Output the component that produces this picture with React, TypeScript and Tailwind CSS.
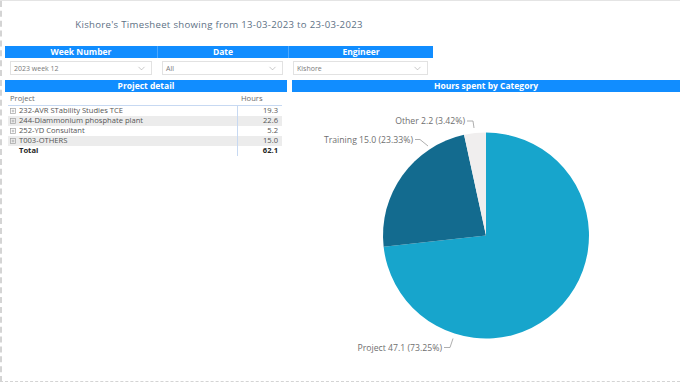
import { ChevronDown } from 'lucide-react'
import React from 'react'

const rows = [
  { name: '232-AVR STability Studies TCE', hours: '19.3' },
  { name: '244-Diammonium phosphate plant', hours: '22.6' },
  { name: '252-YD Consultant', hours: '5.2' },
  { name: 'T003-OTHERS', hours: '15.0' },
]

const slicers = [
  { title: 'Week Number', value: '2023 week 12', width: 'w-[152px]' },
  { title: 'Date', value: 'All', width: 'w-[131px]' },
  { title: 'Engineer', value: 'Kishore', width: 'w-[145px]' },
]

const PlusBox = () => (
  <svg width="6" height="6" viewBox="0 0 6 6" className="shrink-0">
    <rect x="0.5" y="0.5" width="5" height="5" fill="none" stroke="#a0a0a0" strokeWidth="0.7" />
    <path d="M1.6 3h2.8M3 1.6v2.8" stroke="#a0a0a0" strokeWidth="0.7" />
  </svg>
)

const PieChart = () => {
  // center (194,143.5) r 103, slices go clockwise from 12 o'clock
  return (
    <svg width="388" height="288" viewBox="0 0 388 288">
      <path d="M194 143.5 L194 40.5 A103 103 0 1 1 91.62 154.8 Z" fill="#17a5cc" />
      <path d="M194 143.5 L91.62 154.8 A103 103 0 0 1 172.06 42.87 Z" fill="#136b8f" />
      <path d="M194 143.5 L172.06 42.87 A103 103 0 0 1 194 40.5 Z" fill="#f0eeee" />

      <g fill="none" stroke="#9a9a9a" strokeWidth="0.8">
        <path d="M175 29 L181 29 L182 36" />
        <path d="M123 47.5 L128 47.5 L136 54" />
        <path d="M152 255.5 L158 255.5 L161 246.5" />
      </g>
      <g fill="#6f6f6f" fontSize="8.7" fontFamily="'Open Sans', sans-serif" textAnchor="end">
        <text x="173" y="32.3">Other 2.2 (3.42%)</text>
        <text x="121" y="50.8">Training 15.0 (23.33%)</text>
        <text x="150" y="258.8">Project 47.1 (73.25%)</text>
      </g>
    </svg>
  )
}

const App = () => {
  return (
    <div className="w-[680px] h-[382px] bg-white border-t border-[#e4e4e4] font-['Open_Sans',sans-serif] overflow-hidden">
      <div className="h-[381px] border-l-2 border-b border-dashed border-[#d4d4d4] pl-[3px] flex flex-col">
        {/* title */}
        <div className="w-[428px] h-[45px] flex items-center justify-center pt-[3px]">
          <span className="text-[9.6px] tracking-[0.3px] text-[#5d7185]">
            Kishore's Timesheet showing from 13-03-2023 to 23-03-2023
          </span>
        </div>

        {/* slicers */}
        <div className="flex w-[428px]">
          {slicers.map((s, i) => (
            <div key={s.title} className={`${s.width} flex flex-col`}>
              <div
                className={`h-[12px] bg-[#118dff] flex items-center justify-center text-white text-[8.5px] font-bold leading-none ${
                  i > 0 ? 'border-l border-[#4aa8ff]' : ''
                }`}
              >
                {s.title}
              </div>
              <div className="px-[5px] pt-[3px]">
                <div className="h-[14px] border border-[#e2e2e2] flex items-center justify-between pl-[3px] pr-[4px]">
                  <span className="text-[7px] text-[#7a7a7a] leading-none">{s.value}</span>
                  <ChevronDown size={11} strokeWidth={1} color="#8a8a8a" />
                </div>
              </div>
            </div>
          ))}
        </div>

        {/* panels */}
        <div className="flex gap-[5px] mt-[5px] flex-1">
          <div className="w-[282px] flex flex-col">
            <div className="h-[12px] bg-[#118dff] flex items-center justify-center text-white text-[8.5px] font-bold leading-none">
              Project detail
            </div>
            <div className="pl-[3px] pr-[5px] text-[7.6px] leading-none">
              <div className="h-[14px] flex items-center border-b border-[#c7d9f2] text-[#6a6a6a] pt-[1px]">
                <div className="w-[229px] pl-[2px]">Project</div>
                <div className="flex-1 pl-[4px]">Hours</div>
              </div>
              {rows.map((r, i) => (
                <div
                  key={r.name}
                  className={`h-[10px] flex items-center text-[#555] ${i % 2 === 1 ? 'bg-[#ececec]' : ''}`}
                >
                  <div className="w-[229px] pl-[2px] flex items-center gap-[3px]">
                    <PlusBox />
                    <span>{r.name}</span>
                  </div>
                  <div className="flex-1 h-full border-l border-[#c7d9f2] flex items-center justify-end pr-[4px]">
                    {r.hours}
                  </div>
                </div>
              ))}
              <div className="h-[10px] flex items-center font-bold text-[#252525]">
                <div className="w-[229px] pl-[11px]">Total</div>
                <div className="flex-1 h-full border-l border-[#c7d9f2] flex items-center justify-end pr-[4px]">
                  62.1
                </div>
              </div>
            </div>
          </div>

          <div className="flex-1 flex flex-col">
            <div className="h-[12px] bg-[#118dff] flex items-center justify-center text-white text-[8.5px] font-bold leading-none">
              Hours spent by Category
            </div>
            <PieChart />
          </div>
        </div>
      </div>
    </div>
  )
}

export default App
